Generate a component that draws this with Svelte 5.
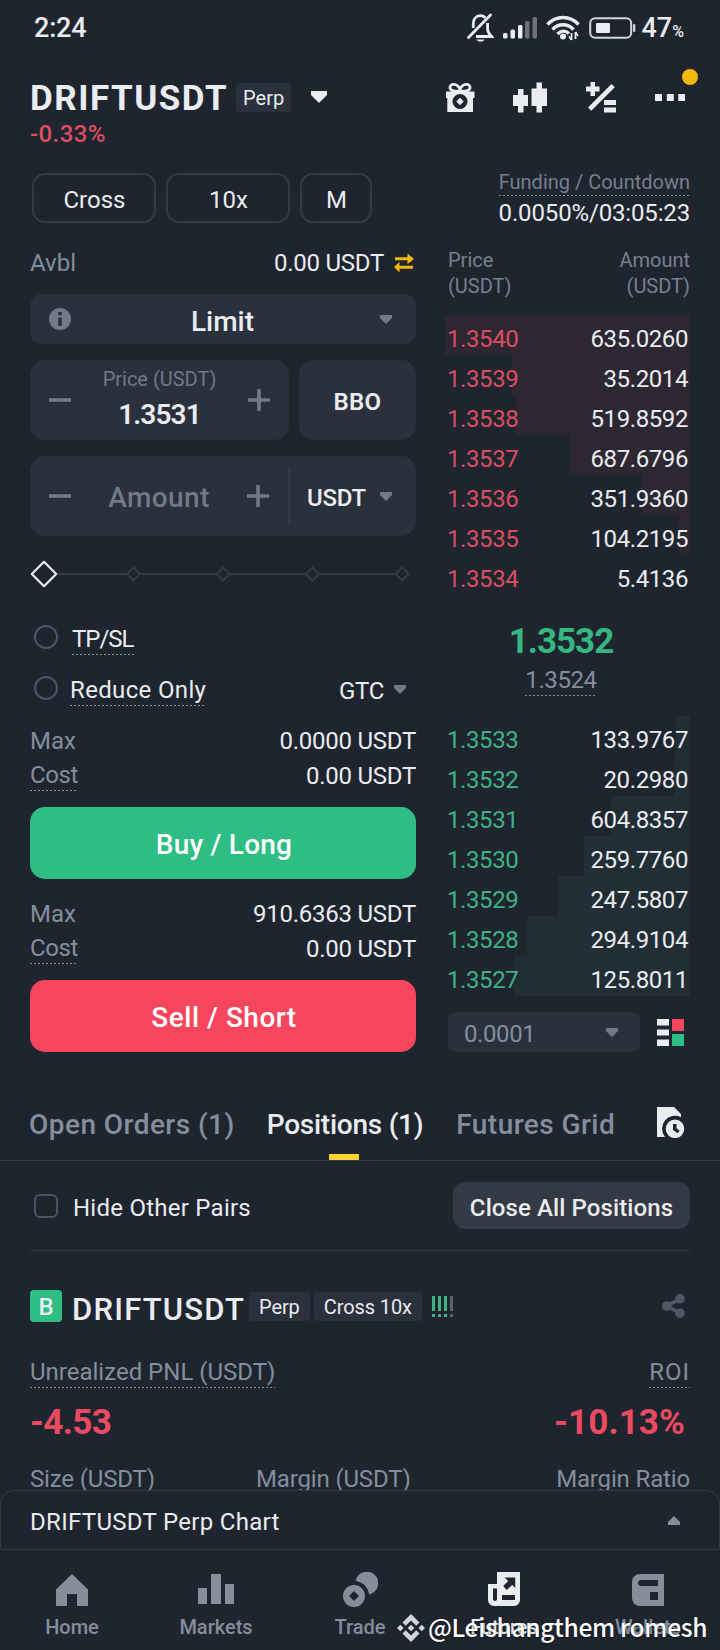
<script>
  const asks = [
    { price: '1.3540', amount: '635.0260', depth: 245 },
    { price: '1.3539', amount: '35.2014', depth: 178 },
    { price: '1.3538', amount: '519.8592', depth: 174 },
    { price: '1.3537', amount: '687.6796', depth: 120 },
    { price: '1.3536', amount: '351.9360', depth: 48 },
    { price: '1.3535', amount: '104.2195', depth: 11 },
    { price: '1.3534', amount: '5.4136', depth: 0 }
  ];

  const bids = [
    { price: '1.3533', amount: '133.9767', depth: 14 },
    { price: '1.3532', amount: '20.2980', depth: 16 },
    { price: '1.3531', amount: '604.8357', depth: 79 },
    { price: '1.3530', amount: '259.7760', depth: 106 },
    { price: '1.3529', amount: '247.5807', depth: 132 },
    { price: '1.3528', amount: '294.9104', depth: 163 },
    { price: '1.3527', amount: '125.8011', depth: 176 }
  ];

  const sides = [
    { type: 'buy', label: 'Buy / Long', max: '0.0000 USDT', cost: '0.00 USDT' },
    { type: 'sell', label: 'Sell / Short', max: '910.6363 USDT', cost: '0.00 USDT' }
  ];

  const nav = ['Home', 'Markets', 'Trade', 'Futures', 'Wallets'];
  let activeTab = $state('Positions (1)');
  const tabs = ['Open Orders (1)', 'Positions (1)', 'Futures Grid'];
</script>

{#snippet caret()}
  <svg class="caret" width="12" height="9" viewBox="0 0 12 9"><path d="M0 0h12v3L6 9 0 3z" /></svg>
{/snippet}

{#snippet minus()}
  <svg class="step" width="22" height="22" viewBox="0 0 22 22"><path d="M0 9.2h22v3.6H0z" /></svg>
{/snippet}

{#snippet plus()}
  <svg class="step" width="22" height="22" viewBox="0 0 22 22"><path d="M9.2 0h3.6v9.2H22v3.6h-9.2V22H9.2v-9.2H0V9.2h9.2z" /></svg>
{/snippet}

{#snippet bookRow(row, side)}
  <div class="book-row {side}">
    <div class="depth" style="width: {row.depth}px"></div>
    <span class="price">{row.price}</span>
    <span class="amount">{row.amount}</span>
  </div>
{/snippet}

<div class="app">
  <div class="scroll">
    <div class="status">
      <span class="time">2:24</span>
      <div class="status-icons">
        <svg width="27" height="30" viewBox="0 0 27 30" fill="none" stroke="#eaecef" stroke-width="2.8">
          <path d="M1.500 24.500 23.500 2" stroke-linecap="round" />
          <path d="M6.300 15V11c0-5 3-8.300 7-8.300 2 0 3.700.7 5 2M20.600 10v6c0 3 1.500 5 4 7.500H9" />
          <path d="M9.500 26.500h8c-.8 1.500-2 2-4 2s-3.200-.5-4-2z" fill="#eaecef" stroke="none" />
        </svg>
        <svg width="34" height="24" viewBox="0 0 34 24">
          <rect x="0" y="17" width="4.500" height="5.500" rx="1.500" />
          <rect x="7.500" y="13.500" width="4.500" height="9" rx="1.500" />
          <rect x="15" y="9" width="4.500" height="13.500" rx="1.500" />
          <rect x="22" y="5" width="4.500" height="17.500" rx="1.500" fill="#6d727a" />
          <rect x="29.500" y="1" width="4.500" height="21.500" rx="1.500" fill="#6d727a" />
        </svg>
        <svg width="34" height="27" viewBox="0 0 34 27" fill="none" stroke="#eaecef" stroke-width="3.400">
          <path d="M1.500 10.500c8.500-9.300 22.500-9.300 31 0" />
          <path d="M6.500 15.500c6-6.300 15-6.300 21 0" />
          <path d="M11.500 20c3.500-3.600 8-3.600 11.500-.5" />
          <circle cx="17" cy="22.500" r="3" fill="#eaecef" stroke="none" />
          <path d="M25.500 19v7M29.500 18v7" stroke-width="1.800" />
          <path d="M23 22.500 25.500 26M32 22l-2.500-4" stroke-width="1.500" />
        </svg>
        <svg width="48" height="22" viewBox="0 0 48 22" fill="none">
          <rect x="1.200" y="1.200" width="41" height="19.500" rx="5" stroke="#d5d8dc" stroke-width="2" />
          <rect x="7" y="6" width="14" height="10" rx="1" fill="#eaecef" />
          <path d="M45.200 8v6" stroke="#d5d8dc" stroke-width="2.200" stroke-linecap="round" />
        </svg>
        <span class="battery">47<small>%</small></span>
      </div>
    </div>

    <div class="title-row">
      <h1>DRIFTUSDT</h1>
      <span class="tag">Perp</span>
      <svg class="title-caret" width="16" height="12" viewBox="0 0 16 12"><path d="M0 0h16v4L8 12 0 4z" /></svg>
      <div class="tools">
        <svg width="30" height="31" viewBox="0 0 30 31">
          <path d="M15 9C13 9 5 10 5 5.500S12 1 15 7c3-6 10-6 10-1.500S17 9 15 9z" fill="none" stroke="#eaecef" stroke-width="2.800" />
          <path fill-rule="evenodd" d="M1 9.500h28.500V16H28v14H2.300V16H1zM15 12a7.500 7.500 0 1 0 0 15 7.500 7.500 0 0 0 0-15z" />
          <path d="M15 15.800 18.700 19.500 15 23.200 11.300 19.500z" />
        </svg>
        <svg width="34" height="31" viewBox="0 0 34 31">
          <path d="M5 7h5.500v6H15v11h-4.500v6.500H5V24H0V13h5zM23.500.5H29v6h5V24h-5v6.500h-5.500V24h-5V6.500h5z" />
        </svg>
        <svg width="31" height="31" viewBox="0 0 31 31">
          <path d="M4.500 0H9v4.500h4.500v5H9V14H4.500V9.500H0v-5h4.500zM25.500 2l3.300 3.300L5.300 28.800 2 25.500zM18 18h12v5H18zM18 25.500h12v5H18z" />
        </svg>
        <div class="more">
          <svg width="30" height="7" viewBox="0 0 30 7"><path d="M0 0h7v7H0zM11.800 0h7v7h-7zM23.300 0h6.700v7h-6.700z" /></svg>
          <span class="dot"></span>
        </div>
      </div>
    </div>
    <div class="change">-0.33%</div>

    <div class="mode-row">
      <button class="mode">Cross</button>
      <button class="mode">10x</button>
      <button class="mode short">M</button>
      <div class="funding">
        <span class="hint">Funding / Countdown</span>
        <span class="rate">0.0050%/03:05:23</span>
      </div>
    </div>

    <div class="trade">
      <div class="form">
        <div class="avbl">
          <span class="muted">Avbl</span>
          <span class="value">0.00 USDT</span>
          <svg width="20" height="20" viewBox="0 0 20 20" fill="#f0b90b"><path d="M1 4.300h12.500V.5L20 6l-6.500 5V7.300H1zM19 15.700H5.500v3.800L0 14l5.500-5v3.700H19z" /></svg>
        </div>

        <div class="field type">
          <svg class="info" width="22" height="22" viewBox="0 0 22 22">
            <circle cx="11" cy="11" r="11" />
            <path d="M9.200 4h3.600v3.300H9.200zM9.200 9.500h3.600V18H9.200z" fill="#2a303c" />
          </svg>
          <span>Limit</span>
          {@render caret()}
        </div>

        <div class="price-row">
          <div class="field stepper">
            {@render minus()}
            <div class="price-input">
              <label for="price">Price (USDT)</label>
              <span id="price">1.3531</span>
            </div>
            {@render plus()}
          </div>
          <button class="field bbo">BBO</button>
        </div>

        <div class="field amount-row">
          <div class="amount-step">
            {@render minus()}
            <span class="placeholder">Amount</span>
            {@render plus()}
          </div>
          <div class="unit">
            <span>USDT</span>
            {@render caret()}
          </div>
        </div>

        <svg class="slider" width="386" height="77" viewBox="0 0 386 77" fill="none">
          <path d="M27 38H97M110 38h76M200 38h75M289 38h76" stroke="#333a46" stroke-width="2" />
          {#each [103.5, 193, 282.5, 372] as x}
            <path d="M{x - 6.5} 38l6.500-6.500 6.500 6.500-6.500 6.500z" stroke="#333a46" stroke-width="2" />
          {/each}
          <path d="M1.800 38 14 25.800 26.200 38 14 50.200z" stroke="#eaecef" stroke-width="2.200" stroke-linejoin="round" />
        </svg>

        <div class="option">
          <span class="radio"></span>
          <span class="hint tpsl">TP/SL</span>
        </div>
        <div class="option">
          <span class="radio"></span>
          <span class="hint reduce">Reduce Only</span>
          <span class="gtc">GTC</span>
          {@render caret()}
        </div>

        {#each sides as side}
          <div class="stats {side.type}">
            <div class="stat"><span class="muted">Max</span><span class="value">{side.max}</span></div>
            <div class="stat"><span class="muted hint cost">Cost</span><span class="value">{side.cost}</span></div>
          </div>
          <button class="submit {side.type}">{side.label}</button>
        {/each}
      </div>

      <div class="book">
        <div class="book-head">
          <span>Price<br />(USDT)</span>
          <span>Amount<br />(USDT)</span>
        </div>
        {#each asks as row}
          {@render bookRow(row, 'ask')}
        {/each}
        <div class="last">
          <strong>1.3532</strong>
          <span class="hint">1.3524</span>
        </div>
        {#each bids as row}
          {@render bookRow(row, 'bid')}
        {/each}
        <div class="book-foot">
          <div class="precision">
            <span>0.0001</span>
            {@render caret()}
          </div>
          <svg width="27" height="27" viewBox="0 0 27 27">
            <path d="M0 0h12v6.500H0zM0 10.500h12v6H0zM0 20.500h12V27H0z" />
            <path d="M15 0h12v12H15z" fill="#f6465d" />
            <path d="M15 15h12v12H15z" fill="#2ebd85" />
          </svg>
        </div>
      </div>
    </div>

    <div class="tabs">
      {#each tabs as tab}
        <button class="tab" class:active={activeTab === tab} onclick={() => (activeTab = tab)}>{tab}</button>
      {/each}
      <svg class="history" width="28" height="31" viewBox="0 0 28 31">
        <path d="M0 0h17l7 7v3.200A13 13 0 0 0 8 30H0z" />
        <path fill-rule="evenodd" d="M18 12.500a9.300 9.300 0 1 0 0 18.600 9.300 9.300 0 0 0 0-18.600zM16 17h3.500v4.200l3.200 2.500-2 2.500L16 23z" />
      </svg>
    </div>

    <div class="filter">
      <span class="checkbox"></span>
      <span class="filter-label">Hide Other Pairs</span>
      <button class="close-all">Close All Positions</button>
    </div>

    <div class="position">
      <div class="position-head">
        <span class="side">B</span>
        <h2>DRIFTUSDT</h2>
        <span class="tag wide">Perp</span>
        <span class="tag wide">Cross 10x</span>
        <svg class="risk" width="21" height="21" viewBox="0 0 21 21" fill="#3eb383">
          <path d="M0 0h3v15H0zM6 0h3v15H6zM12 0h3v15h-3zM0 18h3v3H0zM6 18h3v3H6zM12 18h3v3h-3z" />
          <path d="M18 0h3v15h-3zM18 18h3v3h-3z" fill="#5b626d" />
        </svg>
        <svg class="share" width="23" height="24" viewBox="0 0 23 24" fill="#4f5867">
          <path d="M18 4.800 5 12l13 7.200" fill="none" stroke="#4f5867" stroke-width="3.500" />
          <circle cx="18" cy="4.800" r="4.800" /><circle cx="4.800" cy="12" r="4.800" /><circle cx="18" cy="19.200" r="4.800" />
        </svg>
      </div>
      <div class="pair muted">
        <span class="hint">Unrealized PNL (USDT)</span>
        <span class="hint roi">ROI</span>
      </div>
      <div class="pair pnl">
        <span>-4.53</span>
        <span class="percent">-10.13%</span>
      </div>
      <div class="details muted">
        <span>Size (USDT)</span>
        <span>Margin (USDT)</span>
        <span>Margin Ratio</span>
      </div>
    </div>
  </div>

  <div class="sheet">
    <span>DRIFTUSDT Perp Chart</span>
    <svg class="sheet-caret" width="12" height="9" viewBox="0 0 12 9"><path d="M0 9h12V6L6 0 0 6z" /></svg>
  </div>

  <nav>
    {#each nav as item}
      <div class="nav-item" class:current={item === 'Futures'}>
        <svg width="36" height="36" viewBox="0 0 36 36">
          {#if item === 'Home'}
            <path d="M18 2 34 17.500V34H23V22H13v12H2V17.500z" />
          {:else if item === 'Markets'}
            <path d="M0 16h9v16H0zM13 2h10v30H13zM27 12h9v20h-9z" />
          {:else if item === 'Trade'}
            <path fill-rule="evenodd" d="M12 13a11 11 0 1 0 0 22 11 11 0 0 0 0-22zm0 6 5 5-5 5-5-5z" />
            <path d="M13.500 9A11.500 11.500 0 1 1 27 22.500C26 15 21 10 13.500 9z" />
          {:else if item === 'Futures'}
            <path fill-rule="evenodd" d="M11 0h23v28a6 6 0 0 1-6 6H8a6 6 0 0 1-6-6V12h9zM7 16.500V27c0 2.500 4 2.500 4 0V16.500zM16 23v5h13v-5zM18.500 5.500l3.700 3.500-5 5 3.500 4 5.500-5 3 3V5.500z" />
          {:else}
            <path fill-rule="evenodd" d="M10 2h24v32H10a8 8 0 0 1-8-8V10a8 8 0 0 1 8-8zM11 8c-4 0-4 6 0 6h17V8zM20 20v8h8v-8z" />
          {/if}
        </svg>
        <span>{item}</span>
      </div>
    {/each}
  </nav>

  <div class="watermark">
    <svg width="28" height="28" viewBox="0 0 28 28" fill="#d2d5d9">
      <path d="M14 0l8.500 8.500-3.300 3.300L14 6.600l-5.200 5.200-3.300-3.300zM14 28l8.500-8.500-3.300-3.300-5.200 5.200-5.200-5.200-3.300 3.300zM3.300 10.700 6.600 14l-3.300 3.300L0 14zM24.700 10.700 28 14l-3.300 3.300-3.300-3.300zM14 10.700l3.300 3.300-3.300 3.300-3.300-3.300z" />
    </svg>
    <span>@Leishangthem romesh</span>
  </div>
</div>

<style>
  :global(body) {
    margin: 0;
    background: #1f252f;
  }

  .app {
    position: relative;
    display: flex;
    flex-direction: column;
    width: 720px;
    height: 1650px;
    overflow: hidden;
    background: #1f252f;
    color: #eaecef;
    fill: #eaecef;
    font-family: Roboto, 'Liberation Sans', sans-serif;
    font-size: 24px;
    white-space: nowrap;
  }

  button {
    margin: 0;
    padding: 0;
    border: 0;
    background: none;
    color: inherit;
    font: inherit;
    cursor: pointer;
  }

  h1,
  h2 {
    margin: 0;
  }

  svg {
    display: block;
    flex-shrink: 0;
  }

  .caret,
  .info,
  .step,
  .sheet-caret {
    fill: #707a8a;
  }

  .muted {
    color: #848e9c;
  }

  .hint {
    line-height: 33px;
    background: repeating-linear-gradient(90deg, #848e9c 0 2px, transparent 2px 4px) bottom left / 100% 1px no-repeat;
  }

  .scroll {
    height: 1490px;
    overflow: hidden;
  }

  .status {
    display: flex;
    justify-content: space-between;
    align-items: center;
    height: 55px;
    padding: 0 36px 0 34px;
  }

  .time {
    font-size: 27px;
    font-weight: 500;
    letter-spacing: -0.2px;
  }

  .status-icons {
    display: flex;
    align-items: center;
    gap: 9px;
  }

  .battery {
    margin-left: -4px;
    font-size: 27px;
    font-weight: 500;
  }

  .battery small {
    font-size: 16px;
  }

  .title-row {
    display: flex;
    align-items: center;
    height: 40px;
    margin-top: 22px;
    padding: 0 35px 0 30px;
  }

  h1 {
    padding-top: 3px;
    font-size: 35px;
    font-weight: 700;
    line-height: 40px;
    letter-spacing: 1.5px;
  }

  .tag {
    padding: 0 7px;
    border-radius: 4px;
    background: #2a303c;
    font-size: 20px;
    line-height: 29px;
  }

  .title-row .tag {
    margin-left: 8px;
    padding-top: 2px;
    line-height: 27px;
  }

  .title-caret {
    margin-left: 20px;
  }

  .tools {
    display: flex;
    align-items: center;
    gap: 38.5px;
    margin-left: auto;
  }

  .more {
    position: relative;
  }

  .dot {
    position: absolute;
    top: -25px;
    right: -13px;
    width: 16px;
    height: 16px;
    border-radius: 50%;
    background: #f0b90b;
  }

  .change {
    height: 34px;
    padding-left: 30px;
    color: #dd4d62;
    font-weight: 500;
    line-height: 34px;
    letter-spacing: 0.4px;
  }

  .mode-row {
    display: flex;
    gap: 10px;
    height: 60px;
    margin-top: 16px;
    padding: 0 30px 0 32px;
  }

  .mode {
    box-sizing: border-box;
    width: 124px;
    height: 50px;
    margin-top: 6px;
    padding: 3px 0 0 1px;
    border: 2px solid #333b47;
    border-radius: 13px;
  }

  .mode.short {
    width: 72px;
  }

  .funding {
    display: flex;
    flex-direction: column;
    align-items: flex-end;
    margin-left: auto;
  }

  .funding .hint {
    padding-top: 2px;
    color: #76808f;
    font-size: 20px;
    line-height: 27px;
  }

  .rate {
    margin-top: 3px;
    line-height: 28px;
    letter-spacing: -0.15px;
  }

  .trade {
    display: flex;
    justify-content: space-between;
    margin-top: 8px;
    padding: 0 30px;
  }

  .form {
    width: 386px;
  }

  .avbl {
    display: flex;
    align-items: center;
    height: 55px;
    margin-bottom: 4px;
  }

  .avbl svg {
    margin: 0 2px 0 10px;
  }

  .value {
    margin-left: auto;
    letter-spacing: -0.25px;
  }

  .field {
    border-radius: 15px;
    background: #2a303c;
  }

  .type {
    display: flex;
    justify-content: space-between;
    align-items: center;
    height: 50px;
    padding: 0 24px 0 19px;
    border-radius: 12px;
    font-size: 28px;
    font-weight: 500;
  }

  .type span {
    padding: 4px 6px 0 0;
  }

  .price-row {
    display: flex;
    gap: 10px;
    margin: 16px 0;
  }

  .stepper,
  .amount-step {
    display: flex;
    justify-content: space-between;
    align-items: center;
    box-sizing: border-box;
    width: 259px;
    height: 80px;
    padding: 0 19px;
  }

  .price-input {
    display: flex;
    flex-direction: column;
    align-items: center;
  }

  label {
    color: #707a8a;
    font-size: 20px;
    line-height: 28px;
  }

  .price-input span {
    font-size: 28px;
    font-weight: 600;
    line-height: 43px;
    letter-spacing: -0.9px;
  }

  .bbo {
    flex: 1;
    padding-top: 3px;
    font-weight: 600;
    letter-spacing: 0.3px;
  }

  .amount-row {
    display: flex;
    align-items: center;
  }

  .amount-step {
    padding-right: 20px;
  }

  .placeholder {
    padding-top: 3px;
    color: #707a8a;
    font-size: 28px;
    font-weight: 500;
    letter-spacing: 0.4px;
  }

  .unit {
    display: flex;
    flex: 1;
    justify-content: space-between;
    align-items: center;
    height: 56px;
    margin-left: -1px;
    padding: 0 24px 0 17px;
    border-left: 2px solid #343b47;
    font-weight: 500;
    letter-spacing: -0.3px;
  }

  .unit span {
    padding-top: 3px;
  }

  .option {
    display: flex;
    align-items: center;
    height: 51px;
    padding: 0 10px 0 4px;
  }

  .radio {
    box-sizing: border-box;
    width: 24px;
    height: 24px;
    margin: 0 12px 3px 0;
    border: 2px solid #4c5565;
    border-radius: 50%;
  }

  .option .hint {
    padding-top: 2px;
    line-height: 31px;
  }

  .tpsl {
    margin-left: 2px;
    letter-spacing: -1px;
  }

  .reduce {
    letter-spacing: 0.35px;
  }

  .gtc {
    margin: 3px 10px 0 auto;
    letter-spacing: -0.3px;
  }

  .stats {
    padding: 8px 0 14px;
  }

  .stats.sell {
    padding-top: 17px;
  }

  .stat {
    display: flex;
    align-items: center;
    height: 35px;
  }

  .cost {
    line-height: 31px;
    letter-spacing: -0.4px;
  }

  .submit {
    display: block;
    width: 100%;
    height: 72px;
    padding: 3px 0 0 2px;
    border-radius: 15px;
    color: #fff;
    font-size: 28px;
    font-weight: 500;
    letter-spacing: 0.2px;
  }

  .submit.buy {
    background: #2ebd85;
  }

  .submit.sell {
    background: #f6465d;
    letter-spacing: 0.5px;
  }

  .book {
    width: 245px;
    padding-top: 12px;
  }

  .book-head {
    display: flex;
    justify-content: space-between;
    margin-bottom: 16px;
    padding-left: 3px;
    color: #76808f;
    font-size: 20px;
    line-height: 26px;
  }

  .book-head span:last-child {
    text-align: right;
  }

  .book-row {
    position: relative;
    display: flex;
    justify-content: space-between;
    box-sizing: border-box;
    height: 40px;
    padding: 8px 2px 0;
    line-height: 32px;
    letter-spacing: -0.4px;
  }

  .depth {
    position: absolute;
    top: 0;
    right: 0;
    height: 100%;
  }

  .ask .depth {
    background: #2d2732;
  }

  .bid .depth {
    background: #212e35;
  }

  .price,
  .amount {
    position: relative;
  }

  .ask .price {
    color: #dd4d62;
  }

  .bid .price {
    color: #3eb383;
  }

  .last {
    display: flex;
    flex-direction: column;
    align-items: center;
    height: 97px;
    padding: 24px 13px 0 0;
  }

  .last strong {
    margin-top: 1px;
    color: #36b781;
    font-size: 35px;
    font-weight: 700;
    line-height: 43px;
    letter-spacing: -1px;
  }

  .last .hint {
    padding-top: 2px;
    color: #848e9c;
    line-height: 31px;
    letter-spacing: -0.4px;
  }

  .book-foot {
    display: flex;
    align-items: center;
    justify-content: space-between;
    margin-top: 16px;
    padding: 0 6px 0 3px;
  }

  .precision {
    display: flex;
    align-items: center;
    justify-content: space-between;
    box-sizing: border-box;
    width: 192px;
    height: 40px;
    padding: 0 22px 0 16px;
    border-radius: 8px;
    background: #2a303c;
    color: #848e9c;
    letter-spacing: -0.4px;
  }

  .precision span {
    padding-top: 3px;
  }

  .tabs {
    display: flex;
    align-items: center;
    height: 72px;
    margin-top: 36px;
    padding: 0 35px 0 29px;
    border-bottom: 1px solid #333b47;
  }

  .tab {
    position: relative;
    height: 72px;
    margin-right: 32px;
    color: #848e9c;
    font-size: 28px;
    font-weight: 500;
    letter-spacing: 0.45px;
  }

  .tab.active {
    margin-right: 33px;
    color: #eaecef;
    letter-spacing: -0.25px;
  }

  .tab.active::after {
    content: '';
    position: absolute;
    bottom: 0;
    left: calc(50% - 16px);
    width: 30px;
    height: 6px;
    background: #fcd535;
  }

  .history {
    margin: 0 0 3px auto;
  }

  .filter {
    display: flex;
    align-items: center;
    height: 89px;
    margin: 0 30px;
    border-bottom: 1px solid #333b47;
  }

  .checkbox {
    box-sizing: border-box;
    width: 24px;
    height: 24px;
    margin: 0 15px 0 4px;
    border: 2px solid #4c5565;
    border-radius: 6px;
  }

  .filter-label {
    padding-top: 4px;
    letter-spacing: 0.25px;
  }

  .close-all {
    width: 237px;
    height: 47px;
    margin-left: auto;
    padding-top: 4px;
    border-radius: 12px;
    background: #343a45;
    font-weight: 500;
    letter-spacing: 0.1px;
  }

  .position {
    padding: 38px 30px 0;
  }

  .position-head {
    display: flex;
    align-items: center;
    height: 34px;
  }

  .side {
    box-sizing: border-box;
    width: 32px;
    height: 32px;
    padding-top: 2px;
    border-radius: 4px;
    background: #2ebd85;
    font-weight: 500;
    line-height: 30px;
    text-align: center;
  }

  h2 {
    margin: 6px 4px 0 10px;
    font-size: 31px;
    font-weight: 500;
    letter-spacing: 1.2px;
  }

  .tag.wide {
    margin-right: 4px;
    padding: 2px 10px 0;
    line-height: 27px;
    letter-spacing: -0.1px;
  }

  .risk {
    margin-left: 6px;
  }

  .share {
    margin: 0 5px 0 auto;
  }

  .pair {
    display: flex;
    justify-content: space-between;
    margin-top: 32px;
  }

  .pair .hint {
    padding-top: 2px;
    line-height: 31px;
  }

  .pair .roi {
    letter-spacing: 1px;
  }

  .pnl {
    margin-top: 13px;
    color: #ea4b61;
    font-size: 35px;
    font-weight: 700;
    line-height: 43px;
    letter-spacing: -0.6px;
  }

  .percent {
    padding-right: 5px;
    letter-spacing: 0.1px;
  }

  .details {
    display: grid;
    grid-template-columns: 226px 1fr auto;
    margin-top: 19px;
    line-height: 33px;
    letter-spacing: -0.15px;
  }

  .sheet {
    display: flex;
    justify-content: space-between;
    align-items: center;
    box-sizing: border-box;
    height: 60px;
    padding: 3px 39px 0 29px;
    border: 1px solid #333b47;
    border-radius: 14px 14px 0 0;
    letter-spacing: 0.3px;
  }

  .sheet-caret {
    margin-bottom: 3px;
    fill: #848e9c;
  }

  nav {
    display: flex;
    height: 100px;
  }

  .nav-item {
    display: flex;
    flex: 1;
    flex-direction: column;
    align-items: center;
    padding-top: 22px;
    color: #848e9c;
    fill: #848e9c;
    font-size: 20px;
    font-weight: 500;
    line-height: 38px;
  }

  .nav-item.current {
    color: #eaecef;
    fill: #eaecef;
  }

  .watermark {
    position: absolute;
    left: 397px;
    bottom: 6px;
    display: flex;
    align-items: center;
    gap: 3px;
    color: #fff;
    font-family: 'Noto Sans CJK SC', 'Noto Sans', sans-serif;
    font-size: 24.6px;
    font-weight: 500;
    line-height: 36px;
    letter-spacing: -0.33px;
    text-shadow: 0 1px 2px rgba(0, 0, 0, 0.5);
  }

  .watermark span {
    margin-top: -3px;
  }
</style>
